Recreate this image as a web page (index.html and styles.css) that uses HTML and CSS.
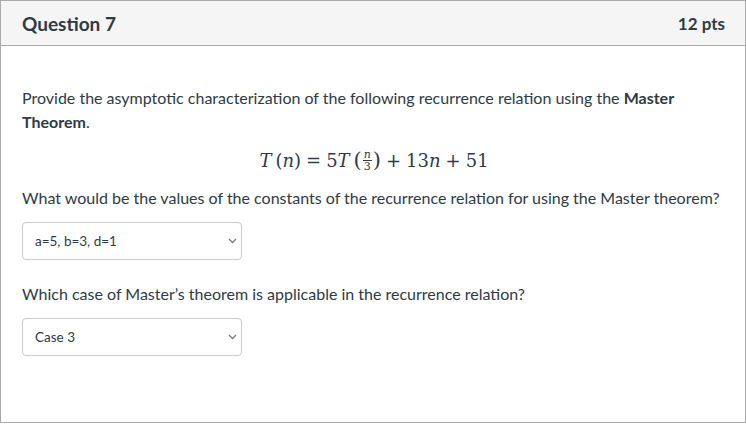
FILE: index.html
```html
<!DOCTYPE html>
<html lang="en">
<head>
<meta charset="UTF-8">
<title>Question 7</title>
<link rel="stylesheet" href="styles.css">
</head>
<body>

<div class="question">
  <div class="header">
    <span class="name">Question 7</span>
    <span class="pts">12 pts</span>
  </div>

  <div class="content">
    <p>Provide the asymptotic characterization of the following recurrence relation using the <b>Master Theorem</b>.</p>

    <div class="formula">
      <span class="eq">
        <i>T</i><span class="paren">(</span><i>n</i>)
        <span class="op">=</span>
        5<i>T</i><span class="paren big">(</span><span class="frac"><i>n</i><span class="den">3</span></span><span class="big">)</span>
        <span class="op">+</span>
        13<i>n</i>
        <span class="op">+</span>
        51
      </span>
    </div>

    <p>What would be the values of the constants of the recurrence relation for using the Master theorem?</p>
    <div class="select-box">
      <select class="answer">
        <option>a=5, b=3, d=1</option>
      </select>
      <svg class="chevron" width="9" height="6" viewBox="0 0 9 6"><path d="M1 1 L4.5 4.5 L8 1" fill="none" stroke="#7a7a7a" stroke-width="1.3"/></svg>
    </div>

    <p class="second">Which case of Master’s theorem is applicable in the recurrence relation?</p>
    <div class="select-box">
      <select class="answer">
        <option>Case 3</option>
      </select>
      <svg class="chevron" width="9" height="6" viewBox="0 0 9 6"><path d="M1 1 L4.5 4.5 L8 1" fill="none" stroke="#7a7a7a" stroke-width="1.3"/></svg>
    </div>
  </div>
</div>

</body>
</html>
```

FILE: styles.css
```css
body {
    margin: 0;
    font-family: Lato, "Liberation Sans", sans-serif;
    color: #2d3b45;
    background: #fff;
}
.question {
    width: 744px;
    height: 421px;
    border: 1px solid #aaa;
}
.header {
    height: 44px;
    background-color: #f5f5f5;
    border-bottom: 1px solid #aaa;
    display: flex;
    align-items: center;
    justify-content: space-between;
    padding: 0 20px 0 21px;
}
.name { font-size: 19px; font-weight: bold; }
.pts { font-size: 17px; font-weight: bold; }
.content { padding: 40px 21px 0 21px; }
.content p {
    margin: 0;
    font-size: 16px;
    line-height: 24px;
}
.formula {
    height: 52px;
    display: flex;
    align-items: center;
    justify-content: center;
    padding-left: 2px;
}
.eq {
    font-family: "DejaVu Serif", "Liberation Serif", serif;
    font-size: 18px;
    white-space: nowrap;
    display: inline-flex;
    align-items: center;
}
.eq i { font-style: italic; }
.paren { margin-left: 4px; }
.big { font-size: 21px; }
.op { margin: 0 5px; }
.frac {
    display: inline-flex;
    flex-direction: column;
    align-items: center;
    font-size: 11px;
    line-height: 11px;
    margin: 0 1px;
}
.den {
    border-top: 1px solid #2d3b45;
    padding: 0 1px;
}
.select-box {
    position: relative;
    width: 220px;
    margin-top: 12px;
}
.answer {
    display: block;
    appearance: none;
    width: 220px;
    height: 38px;
    padding: 0 8px 0 12px;
    font-family: Lato, "Liberation Sans", sans-serif;
    font-size: 13.5px;
    color: #2d3b45;
    background: #fff;
    border: 1px solid #c7cdd1;
    border-radius: 4px;
}
.chevron {
    position: absolute;
    right: 5px;
    top: 16px;
    pointer-events: none;
}
.second { margin-top: 22px !important; }
```
